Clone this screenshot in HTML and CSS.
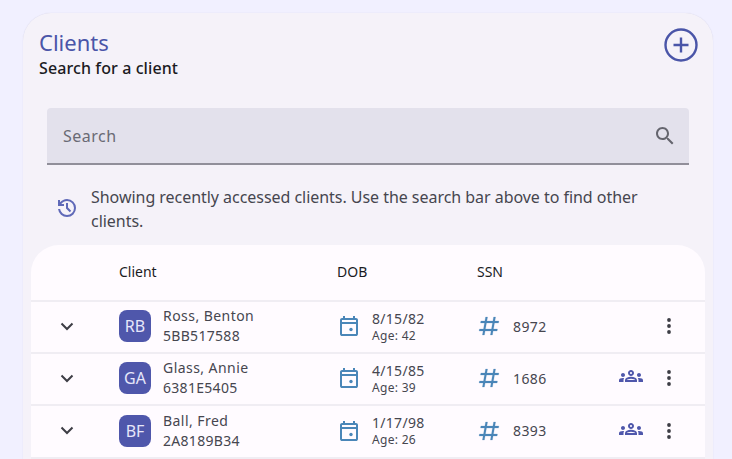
FILE: index.html
```html
<!DOCTYPE html>
<html lang="en">
<head>
    <meta charset="UTF-8">
    <title>Clients</title>
    <link rel="stylesheet" href="styles.css">
</head>
<body>
    <div class="card">
        <div class="card-header">
            <div>
                <h1 class="title">Clients</h1>
                <div class="subtitle">Search for a client</div>
            </div>
            <svg class="add-icon" viewBox="0 0 34 34"><circle cx="17" cy="17" r="15.5"/><path d="M17 9.5v15M9.5 17h15"/></svg>
        </div>

        <div class="search">
            <span>Search</span>
            <svg class="search-icon" viewBox="0 0 24 24"><path d="M15.5 14h-.79l-.28-.27C15.41 12.59 16 11.11 16 9.5 16 5.91 13.09 3 9.5 3S3 5.91 3 9.5 5.91 16 9.5 16c1.61 0 3.09-.59 4.23-1.57l.27.28v.79l5 4.99L20.49 19l-4.99-5zm-6 0C7.01 14 5 11.99 5 9.5S7.01 5 9.5 5 14 7.01 14 9.5 11.99 14 9.5 14z"/></svg>
        </div>

        <div class="notice">
            <svg class="history-icon" viewBox="0 -960 960 960"><path d="M480-120q-138 0-240.5-91.5T122-440h82q14 104 92.5 172T480-200q117 0 198.5-81.5T760-480q0-117-81.5-198.5T480-760q-69 0-129 32t-101 88h110v80H120v-240h80v94q51-64 124.5-99T480-840q150 0 255 105t105 255q0 150-105 255T480-120Zm112-192L440-464v-216h80v184l128 128-56 56Z"/></svg>
            <p>Showing recently accessed clients. Use the search bar above to find other clients.</p>
        </div>

        <div class="table">
            <div class="row head">
                <div></div>
                <div>Client</div>
                <div>DOB</div>
                <div>SSN</div>
            </div>

            <div class="row">
                <svg class="chevron" viewBox="0 0 14 9"><path d="M1.5 1.5 7 7l5.5-5.5"/></svg>
                <div class="client">
                    <div class="avatar">RB</div>
                    <div class="two-line"><span class="name">Ross, Benton</span><span class="code">5BB517588</span></div>
                </div>
                <div class="dob">
                    <svg class="cal" viewBox="0 0 24 24"><use href="#cal"/></svg>
                    <div class="two-line"><span class="date">8/15/82</span><span class="age">Age: 42</span></div>
                </div>
                <div class="ssn">
                    <svg class="pound" viewBox="0 0 24 24"><use href="#pound"/></svg>
                    <span>8972</span>
                </div>
                <div class="actions">
                    <svg class="more" viewBox="0 0 4 16"><use href="#more"/></svg>
                </div>
            </div>

            <div class="row">
                <svg class="chevron" viewBox="0 0 14 9"><path d="M1.5 1.5 7 7l5.5-5.5"/></svg>
                <div class="client">
                    <div class="avatar">GA</div>
                    <div class="two-line"><span class="name">Glass, Annie</span><span class="code">6381E5405</span></div>
                </div>
                <div class="dob">
                    <svg class="cal" viewBox="0 0 24 24"><use href="#cal"/></svg>
                    <div class="two-line"><span class="date">4/15/85</span><span class="age">Age: 39</span></div>
                </div>
                <div class="ssn">
                    <svg class="pound" viewBox="0 0 24 24"><use href="#pound"/></svg>
                    <span>1686</span>
                </div>
                <div class="actions">
                    <svg class="groups" viewBox="0 0 24 24"><use href="#groups"/></svg>
                    <svg class="more" viewBox="0 0 4 16"><use href="#more"/></svg>
                </div>
            </div>

            <div class="row">
                <svg class="chevron" viewBox="0 0 14 9"><path d="M1.5 1.5 7 7l5.5-5.5"/></svg>
                <div class="client">
                    <div class="avatar">BF</div>
                    <div class="two-line"><span class="name">Ball, Fred</span><span class="code">2A8189B34</span></div>
                </div>
                <div class="dob">
                    <svg class="cal" viewBox="0 0 24 24"><use href="#cal"/></svg>
                    <div class="two-line"><span class="date">1/17/98</span><span class="age">Age: 26</span></div>
                </div>
                <div class="ssn">
                    <svg class="pound" viewBox="0 0 24 24"><use href="#pound"/></svg>
                    <span>8393</span>
                </div>
                <div class="actions">
                    <svg class="groups" viewBox="0 0 24 24"><use href="#groups"/></svg>
                    <svg class="more" viewBox="0 0 4 16"><use href="#more"/></svg>
                </div>
            </div>
            <div class="row"></div>
        </div>
    </div>

    <svg class="defs" width="0" height="0">
        <defs>
            <g id="cal">
                <path d="M5 22c-.55 0-1-.2-1.4-.6S3 20.55 3 20V6c0-.55.2-1 .6-1.4S4.45 4 5 4h1V2h2v2h8V2h2v2h1c.55 0 1 .2 1.4.6S21 5.45 21 6v14c0 .55-.2 1-.6 1.4S19.55 22 19 22H5Zm0-2h14V10H5v10ZM5 8h14V6H5v2Z"/>
                <circle cx="14" cy="15.5" r="1.7"/>
            </g>
            <path id="pound" d="M5.41,21L6.12,17H2.12L2.47,15H6.47L7.53,9H3.53L3.88,7H7.88L8.59,3H10.59L9.88,7H15.88L16.59,3H18.59L17.88,7H21.88L21.53,9H17.53L16.47,15H20.47L20.12,17H16.12L15.41,21H13.41L14.12,17H8.12L7.41,21H5.41M9.53,9L8.47,15H14.47L15.53,9H9.53Z"/>
            <path id="groups" d="M4,13c1.1,0,2-0.9,2-2c0-1.1-0.9-2-2-2s-2,0.9-2,2C2,12.1,2.9,13,4,13z M5.13,14.1C4.76,14.04,4.39,14,4,14 c-0.99,0-1.93,0.21-2.78,0.58C0.48,14.9,0,15.62,0,16.43V18l4.5,0v-1.61C4.5,15.56,4.73,14.78,5.13,14.1z M20,13c1.1,0,2-0.9,2-2 c0-1.1-0.9-2-2-2s-2,0.9-2,2C18,12.1,18.9,13,20,13z M24,16.43c0-0.81-0.48-1.53-1.22-1.85C21.93,14.21,20.99,14,20,14 c-0.39,0-0.76,0.04-1.13,0.1c0.4,0.68,0.63,1.46,0.63,2.29V18l4.5,0V16.43z M16.24,13.65c-1.17-0.52-2.61-0.9-4.24-0.9 c-1.63,0-3.07,0.39-4.24,0.9C6.68,14.13,6,15.21,6,16.39V18h12v-1.61C18,15.21,17.32,14.13,16.24,13.65z M8.07,16 c0.09-0.23,0.13-0.39,0.91-0.69c0.97-0.38,1.99-0.56,3.02-0.56s2.05,0.18,3.02,0.56c0.77,0.3,0.81,0.46,0.91,0.69H8.07z M12,8 c0.55,0,1,0.45,1,1s-0.45,1-1,1s-1-0.45-1-1S11.45,8,12,8 M12,6c-1.66,0-3,1.34-3,3c0,1.66,1.34,3,3,3s3-1.34,3-3 C15,7.34,13.66,6,12,6L12,6z"/>
            <g id="more">
                <circle cx="2" cy="2" r="1.9"/>
                <circle cx="2" cy="8" r="1.9"/>
                <circle cx="2" cy="14" r="1.9"/>
            </g>
        </defs>
    </svg>
</body>
</html>
```

FILE: styles.css
```css
html, body {
    height: 100%;
    overflow: hidden;
}

body {
    margin: 0;
    padding: 13px 19px 0 23px;
    box-sizing: border-box;
    background-color: #f1f0ff;
    font-family: "Noto Sans", sans-serif;
    color: #46464f;
}

.defs {
    position: absolute;
}

.card {
    height: 600px;
    padding: 0 8px;
    background-color: #f5f2f9;
    border-radius: 28px 28px 0 0;
    box-shadow: 0 0 1px rgba(70, 70, 120, 0.2);
}

.card-header {
    display: flex;
    justify-content: space-between;
    padding: 14px 7px 0 8px;
    height: 79px;
    box-sizing: border-box;
}

.title {
    margin: 0;
    font-size: 22px;
    font-weight: 400;
    line-height: 30px;
    color: #4a55a8;
}

.subtitle {
    margin-top: 1px;
    font-size: 16px;
    font-weight: 500;
    line-height: 20px;
    letter-spacing: 0.1px;
    color: #1b1b1f;
}

.add-icon {
    width: 34px;
    height: 34px;
    margin-top: 1px;
    fill: none;
    stroke: #4a55a8;
    stroke-width: 2.4;
}

.search {
    display: flex;
    justify-content: space-between;
    align-items: center;
    height: 55px;
    margin: 16px 16px 0;
    padding: 0 12px 0 16px;
    background-color: #e3e1ec;
    border-bottom: 2px solid #918f9a;
    border-radius: 4px 4px 0 0;
    font-size: 16px;
    letter-spacing: 0.5px;
    color: #6a6a74;
}

.search-icon {
    width: 24px;
    height: 24px;
    fill: #65656e;
}

.notice {
    display: flex;
    align-items: center;
    gap: 12px;
    height: 72px;
    padding: 8px 40px 0 24px;
    font-size: 16px;
    line-height: 24px;
    letter-spacing: -0.04px;
}

.notice p {
    margin: 0;
}

.history-icon {
    flex: none;
    width: 24px;
    height: 24px;
    margin-top: -2px;
    fill: #5f69b8;
}

.table {
    min-height: 300px;
    background-color: #fffbff;
    border-radius: 28px 28px 0 0;
}

.row {
    display: grid;
    grid-template-columns: 88px 218px 140px 1fr 88px;
    align-items: center;
    height: 49px;
    padding-bottom: 1.35px;
    border-top: 2px solid #f0edf3;
}

.row.head {
    height: 54.6px;
    align-items: start;
    padding: 17px 0 0;
    box-sizing: border-box;
    border-top: none;
    font-size: 14px;
    line-height: 20px;
    color: #1b1b1f;
}

.chevron {
    justify-self: center;
    width: 14px;
    height: 9px;
    margin-right: 17px;
    fill: none;
    stroke: #3d3d45;
    stroke-width: 2;
}

.client, .dob, .ssn {
    display: flex;
    align-items: center;
}

.avatar {
    width: 32px;
    height: 32px;
    margin-right: 12px;
    border-radius: 8px;
    background-color: #4f57ab;
    color: #e6e6fa;
    font-size: 16px;
    line-height: 32px;
    text-align: center;
}

.two-line {
    display: flex;
    flex-direction: column;
}

.name {
    font-size: 14px;
    line-height: 20px;
    letter-spacing: 0.45px;
}

.code {
    font-size: 14px;
    line-height: 20px;
    letter-spacing: 0.3px;
}

.date {
    margin-top: 1px;
    font-size: 14px;
    line-height: 18px;
    letter-spacing: 0.3px;
}

.age {
    font-size: 12px;
    line-height: 16px;
    letter-spacing: 0.3px;
}

.cal {
    width: 24px;
    height: 24px;
    margin-right: 11px;
    fill: #4a86b8;
}

.pound {
    width: 24px;
    height: 24px;
    margin-right: 12px;
    fill: #4a86b8;
    stroke: #4a86b8;
    stroke-width: 0.2;
}

.ssn {
    font-size: 14px;
    letter-spacing: 0.4px;
}

.actions {
    display: flex;
    justify-content: flex-end;
    align-items: center;
    gap: 24px;
    padding-right: 34px;
}

.groups {
    width: 24px;
    height: 24px;
    margin-bottom: 4px;
    fill: #4f57ab;
}

.more {
    width: 4px;
    height: 16px;
    fill: #3d3d45;
}
```
